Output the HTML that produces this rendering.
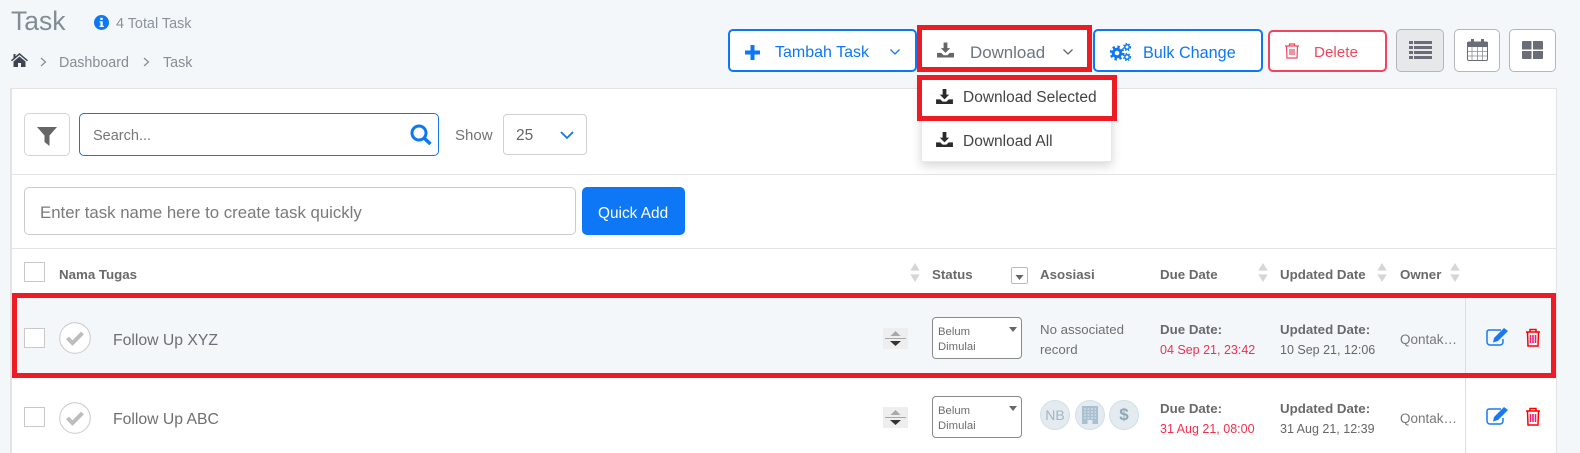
<!DOCTYPE html>
<html><head><meta charset="utf-8"><title>Task</title>
<style>
html,body{margin:0;padding:0;width:1580px;height:453px;overflow:hidden}
body{position:relative;background:#f4f7fa;font-family:"Liberation Sans",sans-serif;color:#6c757d}
.a,.t,svg{position:absolute}
.a{box-sizing:border-box}
.t{white-space:nowrap;line-height:20px;height:20px;margin-top:2px}
.b{font-weight:bold;font-size:13.300px;color:#69696b}
.btn{border:2px solid #0d77f5;border-radius:5px;background:#fff}
.v{border:1px solid #b4b6b8;border-radius:5px;background:#fff}
.cb{width:21px;height:20px;border:1px solid #c9c9c9;background:#fff}
.sel{width:90px;height:42px;border:1px solid #8a8a8a;border-radius:4px;background:#fff}
.s{font-size:11.300px;color:#6c6c6c}
.r{font-size:12.500px}
.red{color:#f0304e}
.cir{width:30px;height:30px;border-radius:50%;background:#e3ebf0;border:1px solid #d2dfe6}
</style></head><body>
<svg width="0" height="0"><defs>
<symbol id="dl" viewBox="0 0 18 16"><path fill="currentColor" d="M7 0h4v6h3l-5 5-5-5h3zM0 11h4.500l2.500 2.500h4L13.500 11H18v5H0z"/></symbol>
<symbol id="sort" viewBox="0 0 10 20"><path fill="#d5d6d8" d="M5 0l5 8H0zM5 20L0 12h10z"/></symbol>
<symbol id="tr" viewBox="0 0 16 19"><path fill="none" stroke="#f00" stroke-width="1.500" d="M1 4h14M5 4V1.500h6V4M2.500 4l.5 14h10l.5-14"/><path stroke="#e8207a" stroke-width="1.600" d="M5.500 7v8M8 7v8M10.500 7v8"/></symbol>
<symbol id="ed" viewBox="0 0 22 18"><path fill="none" stroke="#1a78f2" stroke-width="1.500" d="M15 2H3a2 2 0 0 0-2 2v10a3 3 0 0 0 3 3h10a3 3 0 0 0 3-3v-3"/><path fill="#1a78f2" d="M18 0l4 3-10 10-5 1.500L8 10z"/></symbol>
<symbol id="ck" viewBox="0 0 32 32"><circle cx="16" cy="16" r="15.300" fill="#fff" stroke="#c9c9c9"/><path fill="none" stroke="#bdbdbd" stroke-width="4" d="M8.500 16l5 5L23.500 11"/></symbol>
<symbol id="rs" viewBox="0 0 25 21"><rect width="25" height="21" fill="#eeeeee"/><path fill="#a8a8a8" d="M12.500 3l5 5h-10z"/><path stroke="#a8a8a8" d="M2 10.500h21"/><path fill="#333" d="M7 13h11l-5.500 5z"/></symbol>
<symbol id="car" viewBox="0 0 8 5"><path fill="#666" d="M0 0h8L4 5z"/></symbol>
</defs></svg>

<!-- header -->
<div class="t" style="left:11px;top:6px;font-size:26.500px;height:26px;line-height:26px;color:#828c96">Task</div>
<svg style="left:94px;top:15px" width="15" height="15" viewBox="0 0 15 15"><circle cx="7.500" cy="7.500" r="7.500" fill="#0d77f5"/><rect x="6.300" y="2.800" width="2.400" height="2.200" fill="#fff"/><path fill="#fff" d="M5.500 6.200h3.200v4.500h1v1.300H5.500v-1.300h1V7.500h-1z"/></svg>
<div class="t" style="left:116px;top:12px;font-size:14.400px;color:#8a929a">4 Total Task</div>
<svg style="left:11px;top:53px" width="17" height="14" viewBox="0 0 17 14"><path fill="#3e4550" d="M8.500 0L17 7.200l-1 1.100-7.500-6.300L1 8.300 0 7.200 2.500 5V1h2v2.300zM8.500 3.500L14.500 8.500V14H10V10H7v4H2.500V8.500z"/></svg>
<svg style="left:40px;top:57px" width="7" height="10" viewBox="0 0 7 10"><path fill="none" stroke="#858b91" stroke-width="1.200" d="M1 1l4.500 4L1 9"/></svg>
<div class="t" style="left:59px;top:51px;font-size:14.300px;color:#868d94">Dashboard</div>
<svg style="left:143px;top:57px" width="7" height="10" viewBox="0 0 7 10"><path fill="none" stroke="#858b91" stroke-width="1.200" d="M1 1l4.500 4L1 9"/></svg>
<div class="t" style="left:163px;top:51px;font-size:14.300px;color:#868d94">Task</div>

<!-- card -->
<div class="a" style="left:10px;top:88px;width:1547px;height:365px;background:#fff;border:1px solid #e3e3e3;border-left-width:2px;border-bottom:0"></div>

<!-- action buttons -->
<div class="a btn" style="left:728px;top:29px;width:189px;height:43px"></div>
<svg style="left:745px;top:45px" width="15" height="15" viewBox="0 0 15 15"><path fill="#0d77f5" d="M5.500 0h4v5.500H15v4H9.500V15h-4V9.500H0v-4h5.500z"/></svg>
<div class="t" style="left:775px;top:41px;font-size:16px;color:#0d77f5">Tambah Task</div>
<svg style="left:890px;top:49px" width="10" height="6" viewBox="0 0 10 6"><path fill="none" stroke="#0d77f5" stroke-width="1.300" d="M.5.500L5 5 9.500.5"/></svg>

<div class="a" style="left:917px;top:25px;width:175px;height:47px;background:#fff;border:5px solid #ed1c24"></div>
<svg style="left:937px;top:42px;color:#666" width="17" height="16"><use href="#dl"/></svg>
<div class="t" style="left:970px;top:41px;font-size:16.900px;color:#6c757d">Download</div>
<svg style="left:1063px;top:49px" width="10" height="6" viewBox="0 0 10 6"><path fill="none" stroke="#666" stroke-width="1.300" d="M.5.500L5 5 9.500.5"/></svg>

<div class="a btn" style="left:1093px;top:29px;width:170px;height:43px"></div>
<svg style="left:1110px;top:43px" width="21" height="18" viewBox="0 0 21 18"><g fill="none" stroke="#0d77f5"><circle cx="7" cy="10" r="3.800" stroke-width="3"/><circle cx="7" cy="10" r="6.200" stroke-width="2.500" stroke-dasharray="2.400 2.500"/><circle cx="17" cy="4" r="2.200" stroke-width="1.500"/><circle cx="17" cy="4" r="3.500" stroke-width="1.200" stroke-dasharray="1.500 1.500"/><circle cx="17" cy="14" r="2.200" stroke-width="1.500"/><circle cx="17" cy="14" r="3.500" stroke-width="1.200" stroke-dasharray="1.500 1.500"/></g></svg>
<div class="t" style="left:1143px;top:41px;font-size:16.200px;color:#0d77f5">Bulk Change</div>

<div class="a" style="left:1268px;top:30px;width:119px;height:42px;background:#fff;border:2px solid #f0455d;border-radius:5px"></div>
<svg style="left:1285px;top:43px" width="14" height="16" viewBox="0 0 14 16"><path fill="none" stroke="#f0455d" stroke-width="1.200" d="M0 3h14M4.500 3V1h5v2M1.500 3l.5 12h10l.5-12M5 6v6M7 6v6M9 6v6"/></svg>
<div class="t" style="left:1314px;top:41px;font-size:15.200px;color:#f0455d">Delete</div>

<div class="a v" style="left:1396px;top:29px;width:48px;height:43px;background:#e6e8ea"></div>
<svg style="left:1409px;top:41px" width="23" height="18" viewBox="0 0 23 18"><path fill="#6a6d78" d="M0 0h4v3H0zM5 0h18v3H5zM0 5h4v3H0zM5 5h18v3H5zM0 10h4v3H0zM5 10h18v3H5zM0 15h4v3H0zM5 15h18v3H5z"/></svg>
<div class="a v" style="left:1454px;top:29px;width:46px;height:43px"></div>
<svg style="left:1467px;top:39px" width="21" height="22" viewBox="0 0 21 22"><rect x=".5" y="3" width="20" height="18.500" rx="1.500" fill="none" stroke="#6a6d78"/><path fill="#6a6d78" d="M0 3h21v5H0zM4 0h3v4H4zM14 0h3v4h-3z"/><path stroke="#8b8e97" stroke-width=".8" d="M5 8v13M10.500 8v13M15.500 8v13M1 12.500h19M1 17h19"/></svg>
<div class="a v" style="left:1509px;top:29px;width:47px;height:43px"></div>
<svg style="left:1522px;top:41px" width="21" height="18" viewBox="0 0 21 18"><path fill="#6a6d78" d="M0 1a1 1 0 0 1 1-1h8.500v8.500H0zM11 0h9a1 1 0 0 1 1 1v7.500H11zM0 10h9.500v8H1a1 1 0 0 1-1-1zM11 10h10v7a1 1 0 0 1-1 1h-9z"/></svg>

<!-- toolbar row -->
<div class="a" style="left:24px;top:113px;width:46px;height:43px;background:#fff;border:1px solid #d4d4d4;border-radius:5px"></div>
<svg style="left:37px;top:127px" width="20" height="19" viewBox="0 0 20 19"><path fill="#666" d="M0 0h20l-7.500 8.500V19L7.500 15V8.500z"/></svg>
<div class="a" style="left:79px;top:113px;width:360px;height:43px;background:#fff;border:1px solid #1a73e8;border-radius:5px"></div>
<div class="t" style="left:93px;top:124px;font-size:14.500px;color:#777">Search...</div>
<svg style="left:410px;top:124px" width="22" height="21" viewBox="0 0 22 21"><circle cx="9" cy="9" r="7" fill="none" stroke="#0d77f5" stroke-width="3"/><path stroke="#0d77f5" stroke-width="3.500" d="M14 14l6.500 6"/></svg>
<div class="t" style="left:455px;top:124px;font-size:15px;color:#737373">Show</div>
<div class="a" style="left:503px;top:114px;width:84px;height:41px;background:#fff;border:1px solid #d0d0d0;border-radius:4px"></div>
<div class="t" style="left:516px;top:124px;font-size:15.500px;color:#666">25</div>
<svg style="left:560px;top:131px" width="14" height="9" viewBox="0 0 14 9"><path fill="none" stroke="#0d77f5" stroke-width="1.800" d="M1 1l6 6 6-6"/></svg>

<div class="a" style="left:12px;top:174px;width:1544px;height:1px;background:#e3e3e3"></div>
<div class="a" style="left:24px;top:187px;width:552px;height:48px;background:#fff;border:1px solid #cbcbcb;border-radius:5px"></div>
<div class="t" style="left:40px;top:201px;font-size:16.800px;color:#7a7a7a">Enter task name here to create task quickly</div>
<div class="a" style="left:582px;top:187px;width:103px;height:48px;background:#0d77f5;border-radius:5px"></div>
<div class="t" style="left:598px;top:202px;font-size:15.400px;color:#fff">Quick Add</div>
<div class="a" style="left:12px;top:248px;width:1544px;height:1px;background:#e3e3e3"></div>

<!-- dropdown -->
<div class="a" style="left:921px;top:78px;width:191px;height:84px;background:#fff;border:1px solid #e8e8e8;box-shadow:0 4px 10px rgba(0,0,0,.16)"></div>
<div class="a" style="left:917px;top:75px;width:200px;height:46px;background:#fff;border:5px solid #ed1c24"></div>
<svg style="left:936px;top:89px;color:#2b2b2b" width="17" height="15"><use href="#dl"/></svg>
<div class="t" style="left:963px;top:86px;font-size:15.500px;color:#444">Download Selected</div>
<svg style="left:936px;top:132px;color:#2b2b2b" width="17" height="15"><use href="#dl"/></svg>
<div class="t" style="left:963px;top:130px;font-size:15.500px;color:#444">Download All</div>

<!-- table head -->
<div class="a cb" style="left:24px;top:262px"></div>
<div class="t b" style="left:59px;top:263px">Nama Tugas</div>
<svg style="left:910px;top:263px" width="10" height="19"><use href="#sort"/></svg>
<div class="t b" style="left:932px;top:263px">Status</div>
<div class="a" style="left:1011px;top:267px;width:17px;height:17px;border:1px solid #bbb;border-radius:2px;background:#fff"></div>
<svg style="left:1015px;top:275px" width="9" height="5"><use href="#car"/></svg>
<div class="t b" style="left:1040px;top:263px">Asosiasi</div>
<div class="t b" style="left:1160px;top:263px">Due Date</div>
<svg style="left:1258px;top:263px" width="10" height="19"><use href="#sort"/></svg>
<div class="t b" style="left:1280px;top:263px">Updated Date</div>
<svg style="left:1377px;top:263px" width="10" height="19"><use href="#sort"/></svg>
<div class="t b" style="left:1400px;top:263px">Owner</div>
<svg style="left:1450px;top:263px" width="10" height="19"><use href="#sort"/></svg>

<!-- row 1 -->
<div class="a" style="left:12px;top:293px;width:1544px;height:85px;background:#f4f7fa;border:5px solid #ed1c24"></div>
<div class="a" style="left:1465px;top:298px;width:1px;height:75px;background:#dcdfe2"></div>
<div class="a" style="left:1465px;top:378px;width:1px;height:75px;background:#dcdfe2"></div>
<div class="a cb" style="left:24px;top:328px"></div>
<svg style="left:59px;top:322px" width="32" height="32"><use href="#ck"/></svg>
<div class="t" style="left:113px;top:329px;font-size:15.750px;color:#6f6f6f">Follow Up XYZ</div>
<svg style="left:883px;top:328px" width="25" height="21"><use href="#rs"/></svg>
<div class="a sel" style="left:932px;top:317px"></div>
<div class="t s" style="left:938px;top:320px">Belum</div>
<div class="t s" style="left:938px;top:335px">Dimulai</div>
<svg style="left:1009px;top:327px" width="8" height="5"><use href="#car"/></svg>
<div class="t" style="left:1040px;top:318px;font-size:13.250px;color:#6f6f6f">No associated</div>
<div class="t" style="left:1040px;top:338px;font-size:13.250px;color:#6f6f6f">record</div>
<div class="t b" style="left:1160px;top:318px">Due Date:</div>
<div class="t r red" style="left:1160px;top:338px">04 Sep 21, 23:42</div>
<div class="t b" style="left:1280px;top:318px">Updated Date:</div>
<div class="t r" style="left:1280px;top:338px;color:#666">10 Sep 21, 12:06</div>
<div class="t" style="left:1400px;top:328px;font-size:13.500px;color:#777">Qontak…</div>
<svg style="left:1486px;top:328px" width="22" height="18"><use href="#ed"/></svg>
<svg style="left:1525px;top:328px" width="16" height="19"><use href="#tr"/></svg>

<!-- row 2 -->
<div class="a cb" style="left:24px;top:407px"></div>
<svg style="left:59px;top:402px" width="32" height="32"><use href="#ck"/></svg>
<div class="t" style="left:113px;top:408px;font-size:15.750px;color:#6f6f6f">Follow Up ABC</div>
<svg style="left:883px;top:407px" width="25" height="21"><use href="#rs"/></svg>
<div class="a sel" style="left:932px;top:396px"></div>
<div class="t s" style="left:938px;top:399px">Belum</div>
<div class="t s" style="left:938px;top:414px">Dimulai</div>
<svg style="left:1009px;top:406px" width="8" height="5"><use href="#car"/></svg>
<div class="a cir" style="left:1040px;top:400px"></div>
<div class="t" style="left:1040px;top:403px;width:30px;text-align:center;font-size:14px;color:#a3b4c0">NB</div>
<div class="a cir" style="left:1075px;top:400px"></div>
<svg style="left:1082px;top:406px" width="16" height="18" viewBox="0 0 16 18"><rect width="16" height="18" fill="#a9c0d0"/><path stroke="#e3ebf0" stroke-dasharray="2 1.500" d="M2 3h12M2 6h12M2 9h12M2 12h12"/><rect x="5.500" y="14" width="5" height="4" fill="#e3ebf0"/></svg>
<div class="a cir" style="left:1109px;top:400px"></div>
<div class="t" style="left:1109px;top:403px;width:30px;text-align:center;font-size:17px;font-weight:bold;color:#8fa7b7">$</div>
<div class="t b" style="left:1160px;top:397px">Due Date:</div>
<div class="t r red" style="left:1160px;top:417px">31 Aug 21, 08:00</div>
<div class="t b" style="left:1280px;top:397px">Updated Date:</div>
<div class="t r" style="left:1280px;top:417px;color:#666">31 Aug 21, 12:39</div>
<div class="t" style="left:1400px;top:407px;font-size:13.500px;color:#777">Qontak…</div>
<svg style="left:1486px;top:407px" width="22" height="18"><use href="#ed"/></svg>
<svg style="left:1525px;top:407px" width="16" height="19"><use href="#tr"/></svg>
</body></html>
